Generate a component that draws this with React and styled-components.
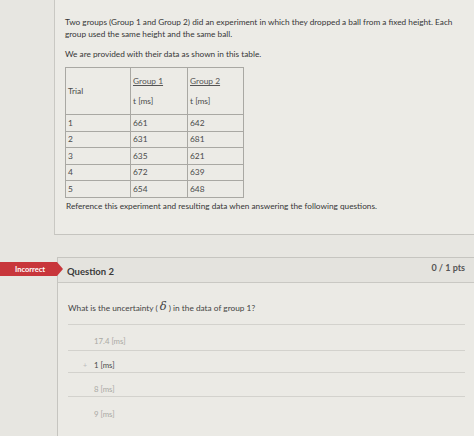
import React from "react";
import styled, { createGlobalStyle } from "styled-components";

const Global = createGlobalStyle`
  html, body { margin: 0; padding: 0; background: #e7e6e1; }
  body { font-family: Lato, "Open Sans", sans-serif; color: #363636; }
  * { box-sizing: border-box; }
`;

const Page = styled.div`
  width: 474px;
  height: 436px;
  overflow: hidden;
  background: #e7e6e1;
  display: flex;
  flex-direction: column;
`;

const IntroCard = styled.div`
  margin-left: 54px;
  height: 236px;
  background: #ecebe6;
  border-left: 1px solid #c9c8c3;
  border-bottom: 1px solid #c5c4bf;
  padding: 16px 8px 0 10px;
  font-size: 8.25px;
  line-height: 12px;
`;

const P = styled.p`
  margin: 0 0 ${(p) => p.$mb || 7}px 0;
`;

const Table = styled.table`
  border-collapse: collapse;
  margin: 3px 0 0 0;
  font-size: 8.4px;
  color: #4a4a4a;
`;

const Td = styled.td`
  border: 1px solid #a9a8a3;
  padding: 0 2px;
  width: ${(p) => p.$w}px;
  height: ${(p) => p.$h || 16.5}px;
  vertical-align: middle;
`;

const HeadCell = styled.div`
  display: flex;
  flex-direction: column;
  gap: 8px;
`;

const U = styled.span`
  text-decoration: underline;
  color: #555;
`;

const Ref = styled.p`
  margin: 2px 0 0 1px;
`;

const Gap = styled.div`
  height: 22px;
`;

const QRow = styled.div`
  position: relative;
  flex: 1;
  display: flex;
`;

const Badge = styled.div`
  position: absolute;
  left: 0;
  top: 5px;
  height: 14px;
  width: 63px;
  background: #c8363b;
  clip-path: polygon(0 0, 57px 0, 63px 50%, 57px 100%, 0 100%);
  color: #fff;
  font-size: 7.5px;
  font-weight: 700;
  display: flex;
  align-items: center;
  padding-left: 15px;
`;

const QCard = styled.div`
  margin-left: 57px;
  flex: 1;
  border-left: 1px solid #c6c5c0;
  border-top: 1px solid #c6c5c0;
  background: #ebeae5;
  display: flex;
  flex-direction: column;
`;

const QHeader = styled.div`
  height: 25px;
  background: #e4e3de;
  border-bottom: 1px solid #c9c8c3;
  display: flex;
  justify-content: space-between;
  align-items: flex-start;
  padding: 0 9px 0 9px;
`;

const QTitle = styled.div`
  font-size: 9.5px;
  font-weight: 700;
  color: #3a3a3a;
  margin-top: 8px;
`;

const Pts = styled.div`
  font-size: 9px;
  font-weight: 700;
  color: #555;
  margin-top: 4px;
`;

const QBody = styled.div`
  padding: 19px 9px 0 10px;
  font-size: 8.3px;
`;

const QText = styled.div`
  display: flex;
  align-items: center;
  height: 12px;
  margin-bottom: 10px;
  color: #444;
`;

const Delta = styled.span`
  font-family: "DejaVu Serif", serif;
  font-style: italic;
  font-size: 11.5px;
  margin: -5px 2px 0 2px;
`;

const Answer = styled.div`
  height: ${(p) => p.$h || 24}px;
  border-top: 1px solid #d3d2cd;
  display: flex;
  align-items: flex-start;
  padding-top: ${(p) => p.$pt || 12}px;
  padding-left: 16px;
  font-size: 7.8px;
  line-height: 10px;
  color: ${(p) => (p.$chosen ? "#4a4a4a" : "#aaa9a4")};
  position: relative;
`;

const Mark = styled.span`
  position: absolute;
  left: 15px;
  color: #bbb;
  font-size: 7px;
`;

const AnsText = styled.span`
  margin-left: 10px;
`;

const rows = [
  ["1", "661", "642"],
  ["2", "631", "681"],
  ["3", "635", "621"],
  ["4", "672", "639"],
  ["5", "654", "648"],
];

export default function App() {
  return (
    <Page>
      <Global />
      <IntroCard>
        <P $mb={8}>
          Two groups (Group 1 and Group 2) did an experiment in which they dropped a ball from a fixed height. Each
          group used the same height and the same ball.
        </P>
        <P $mb={0}>We are provided with their data as shown in this table.</P>
        <Table>
          <tbody>
            <tr>
              <Td $w={65} $h={47}>Trial</Td>
              <Td $w={57} $h={47}>
                <HeadCell>
                  <U>Group 1</U>
                  <span>t [ms]</span>
                </HeadCell>
              </Td>
              <Td $w={56} $h={47}>
                <HeadCell>
                  <U>Group 2</U>
                  <span>t [ms]</span>
                </HeadCell>
              </Td>
            </tr>
            {rows.map((r) => (
              <tr key={r[0]}>
                <Td $w={65}>{r[0]}</Td>
                <Td $w={57}>{r[1]}</Td>
                <Td $w={56}>{r[2]}</Td>
              </tr>
            ))}
          </tbody>
        </Table>
        <Ref>Reference this experiment and resulting data when answering the following questions.</Ref>
      </IntroCard>
      <Gap />
      <QRow>
        <Badge>Incorrect</Badge>
        <QCard>
          <QHeader>
            <QTitle>Question 2</QTitle>
            <Pts>0 / 1 pts</Pts>
          </QHeader>
          <QBody>
            <QText>
              What is the uncertainty (<Delta>δ</Delta>) in the data of group 1?
            </QText>
            <Answer $h={26} $pt={11}><AnsText>17.4 [ms]</AnsText></Answer>
            <Answer $chosen $h={22} $pt={9}><Mark>+</Mark><AnsText>1 [ms]</AnsText></Answer>
            <Answer $h={24} $pt={11}><AnsText>8 [ms]</AnsText></Answer>
            <Answer $h={40} $pt={12}><AnsText>9 [ms]</AnsText></Answer>
          </QBody>
        </QCard>
      </QRow>
    </Page>
  );
}
